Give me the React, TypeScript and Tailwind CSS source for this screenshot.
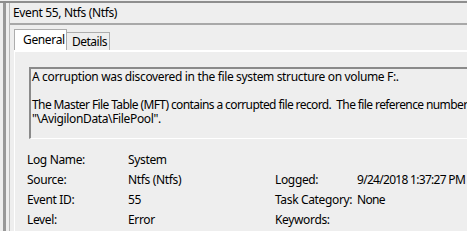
import React from 'react'

const rows: [string, string, string?, string?][] = [
  ['Log Name:', 'System'],
  ['Source:', 'Ntfs (Ntfs)', 'Logged:', '9/24/2018 1:37:27 PM'],
  ['Event ID:', '55', 'Task Category:', 'None'],
  ['Level:', 'Error', 'Keywords:', ''],
]

export default function App() {
  return (
    <div className="w-[467px] h-[231px] overflow-hidden bg-[#eeeeee] pt-px font-['Noto_Sans',sans-serif] text-[12px] tracking-[-0.35px] text-black">
      <div className="h-full border-t-2 border-[#8e8e8e] pl-[3px]">
        <div className="h-full border-l-[3px] border-[#989898] pl-[3px]">
          <div className="h-full border-l border-[#b9b9b9]">
            {/* header */}
            <div className="h-[20px] pl-[3px] flex items-center leading-none">Event 55, Ntfs (Ntfs)</div>
            <div className="border-t-2 border-[#a8a8a8]" />

            <div className="pl-[4px] pt-[4px]">
              {/* tabs */}
              <div className="flex items-end h-[21px]">
                <div className="w-[53px] h-[21px] shrink-0 bg-white border border-b-0 border-[#adadad] pl-[8px] flex items-center leading-none">General</div>
                <div className="w-[43px] h-[18px] shrink-0 border border-l-0 border-b-0 border-[#adadad] pl-[5px] flex items-center leading-none tracking-[-0.5px]">Details</div>
              </div>

              {/* panel */}
              <div className="border-t-2 border-l border-white h-[200px] pl-[12px] pt-[15px]">
                <div className="ml-[2px] w-[600px] h-[72px] border-t-2 border-l-2 border-t-[#8a8a8a] border-l-[#8a8a8a] border-b border-r border-b-white border-r-white pl-px pt-px overflow-hidden">
                  <div className="whitespace-pre leading-[14px]">
                    <div>A corruption was discovered in the file system structure on volume F:.</div>
                    <div className="h-[14px]" />
                    <div className="tracking-[-0.6px]">{'The Master File Table (MFT) contains a corrupted file record.  The file reference number is 0x700000000005a. The name of the file is'}</div>
                    <div>"\AvigilonData\FilePool".</div>
                  </div>
                </div>

                <div className="mt-[11px]">
                  {rows.map(([l1, v1, l2, v2]) => (
                    <div key={l1} className="h-[20px] flex items-center leading-none whitespace-nowrap">
                      <span className="w-[101px] shrink-0">{l1}</span>
                      <span className="w-[147px] shrink-0">{v1}</span>
                      {l2 && <span className="w-[82px] shrink-0">{l2}</span>}
                      {l2 && <span className="shrink-0 tracking-[-0.7px]">{v2}</span>}
                    </div>
                  ))}
                </div>
              </div>
            </div>
          </div>
        </div>
      </div>
    </div>
  )
}
